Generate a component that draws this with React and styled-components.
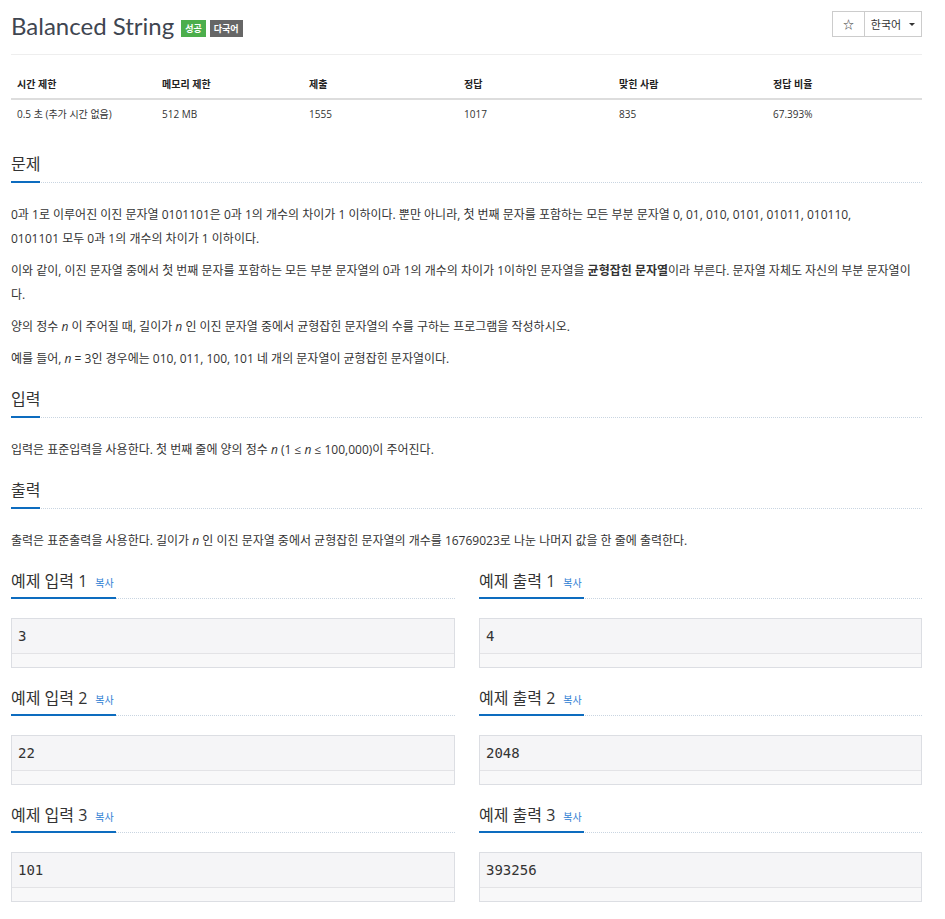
import styled, { createGlobalStyle } from "styled-components";

const GlobalStyle = createGlobalStyle`
  body {
    margin: 0;
    background: #fff;
    font-family: "Open Sans", "Noto Sans CJK KR", sans-serif;
    color: #333;
  }
`;

const Page = styled.div`
  width: 911px;
  padding: 11px 0 20px 11px;
`;

const TitleBar = styled.div`
  display: flex;
  align-items: flex-start;
  justify-content: space-between;
  padding-bottom: 14px;
  border-bottom: 1px solid #eee;
`;

const TitleLeft = styled.div`
  display: flex;
  align-items: center;
  gap: 4px;
`;

const Title = styled.h1`
  margin: 0 3px 0 0;
  font-family: Lato, "Noto Sans CJK KR", sans-serif;
  font-size: 24px;
  font-weight: 400;
  color: #3f4651;
  line-height: 29px;
`;

const Label = styled.span`
  display: inline-block;
  margin-top: 5px;
  padding: 3px 4px;
  font-size: 9px;
  line-height: 11px;
  font-weight: 700;
  color: #fff;
  background: ${(p) => p.bg};
`;

const BtnGroup = styled.div`
  display: flex;
  border: 1px solid #ccc;
  height: 24px;
`;

const Btn = styled.div`
  display: flex;
  align-items: center;
  justify-content: center;
  gap: 8px;
  width: ${(p) => p.w}px;
  font-size: 11px;
  color: #333;
  & + & {
    border-left: 1px solid #ccc;
  }
`;

const Caret = styled.span`
  width: 0;
  height: 0;
  border-left: 3px solid transparent;
  border-right: 3px solid transparent;
  border-top: 3px solid #333;
`;

const Table = styled.table`
  width: 100%;
  margin-top: 15px;
  border-collapse: collapse;
  font-size: 10px;
  th, td {
    text-align: left;
    padding: 6px 6px;
    line-height: 16px;
  }
  th {
    font-weight: 700;
    color: #222;
    border-bottom: 2px solid #ddd;
  }
`;

const Col = styled.col`
  width: ${(p) => p.w}px;
`;

const Section = styled.section`
  margin-top: ${(p) => p.top || 16}px;
`;

const HeadLine = styled.div`
  display: flex;
  border-bottom: 1px dotted #c9d5e1;
`;

const Heading = styled.h2`
  margin: 0 0 -1px;
  display: flex;
  align-items: baseline;
  gap: 8px;
  font-size: 16px;
  font-weight: 400;
  line-height: ${(p) => (p.small ? 22 : 24)}px;
  padding: 0 ${(p) => (p.small ? 2 : 0)}px 5px 0;
  color: #333;
  border-bottom: 2px solid #0d6cbf;
`;

const Copy = styled.span`
  font-size: 10px;
  line-height: 14px;
  color: #2c7dd3;
`;

const Body = styled.div`
  padding-top: 20px;
  font-size: 12px;
  line-height: 24px;
  p {
    margin: 0 0 8px;
  }
  p:last-child {
    margin-bottom: 0;
  }
  b {
    font-weight: 700;
  }
`;

const SampleGrid = styled.div`
  display: grid;
  grid-template-columns: 444px 443px;
  column-gap: 24px;
  row-gap: 19px;
  margin-top: 17px;
`;

const CodeBox = styled.div`
  margin-top: 19px;
  border: 1px solid #dcdee3;
  background: #f7f7f9;
`;

const Pre = styled.pre`
  margin: 0;
  padding: 0 6px;
  height: 34px;
  line-height: 34px;
  font-family: "DejaVu Sans Mono", "Liberation Mono", monospace;
  font-size: 14px;
  color: #333;
  background: #f5f5f7;
  border-bottom: 1px solid #e3e3e6;
`;

const Foot = styled.div`
  height: 13px;
  background: #f8f8f9;
`;

const stats = [
  ["시간 제한", "0.5 초 (추가 시간 없음)", 145],
  ["메모리 제한", "512 MB", 147],
  ["제출", "1555", 155],
  ["정답", "1017", 155],
  ["맞힌 사람", "835", 154],
  ["정답 비율", "67.393%", 155],
];

const samples = [
  ["예제 입력 1", "3", "예제 출력 1", "4"],
  ["예제 입력 2", "22", "예제 출력 2", "2048"],
  ["예제 입력 3", "101", "예제 출력 3", "393256"],
];

const Sample = ({ title, value }) => (
  <div>
    <HeadLine>
      <Heading small>
        {title}
        <Copy>복사</Copy>
      </Heading>
    </HeadLine>
    <CodeBox>
      <Pre>{value}</Pre>
      <Foot />
    </CodeBox>
  </div>
);

export default function App() {
  return (
    <Page>
      <GlobalStyle />
      <TitleBar>
        <TitleLeft>
          <Title>Balanced String</Title>
          <Label bg="#4cae4c">성공</Label>
          <Label bg="#666">다국어</Label>
        </TitleLeft>
        <BtnGroup>
          <Btn w={31}>☆</Btn>
          <Btn w={56}>
            한국어 <Caret />
          </Btn>
        </BtnGroup>
      </TitleBar>

      <Table>
        <colgroup>
          {stats.map(([h, , w]) => (
            <Col key={h} w={w} />
          ))}
        </colgroup>
        <thead>
          <tr>
            {stats.map(([h]) => (
              <th key={h}>{h}</th>
            ))}
          </tr>
        </thead>
        <tbody>
          <tr>
            {stats.map(([h, v]) => (
              <td key={h}>{v}</td>
            ))}
          </tr>
        </tbody>
      </Table>

      <Section top={24}>
        <HeadLine>
          <Heading>문제</Heading>
        </HeadLine>
        <Body>
          <p>
            0과 1로 이루어진 이진 문자열 0101101은 0과 1의 개수의 차이가 1 이하이다. 뿐만 아니라, 첫 번째 문자를 포함하는 모든 부분 문자열 0, 01, 010, 0101, 01011, 010110,
            <br />
            0101101 모두 0과 1의 개수의 차이가 1 이하이다.
          </p>
          <p>
            이와 같이, 이진 문자열 중에서 첫 번째 문자를 포함하는 모든 부분 문자열의 0과 1의 개수의 차이가 1이하인 문자열을 <b>균형잡힌 문자열</b>이라 부른다. 문자열 자체도 자신의 부분 문자열이다.
          </p>
          <p>
            양의 정수 <i>n</i> 이 주어질 때, 길이가 <i>n</i> 인 이진 문자열 중에서 균형잡힌 문자열의 수를 구하는 프로그램을 작성하시오.
          </p>
          <p>
            예를 들어, <i>n</i> = 3인 경우에는 010, 011, 100, 101 네 개의 문자열이 균형잡힌 문자열이다.
          </p>
        </Body>
      </Section>

      <Section>
        <HeadLine>
          <Heading>입력</Heading>
        </HeadLine>
        <Body>
          <p>
            입력은 표준입력을 사용한다. 첫 번째 줄에 양의 정수 <i>n</i> (1 ≤ <i>n</i> ≤ 100,000)이 주어진다.
          </p>
        </Body>
      </Section>

      <Section>
        <HeadLine>
          <Heading>출력</Heading>
        </HeadLine>
        <Body>
          <p>
            출력은 표준출력을 사용한다. 길이가 <i>n</i> 인 이진 문자열 중에서 균형잡힌 문자열의 개수를 16769023로 나눈 나머지 값을 한 줄에 출력한다.
          </p>
        </Body>
      </Section>

      <SampleGrid>
        {samples.map(([inT, inV, outT, outV]) => [
          <Sample key={inT} title={inT} value={inV} />,
          <Sample key={outT} title={outT} value={outV} />,
        ])}
      </SampleGrid>
    </Page>
  );
}
